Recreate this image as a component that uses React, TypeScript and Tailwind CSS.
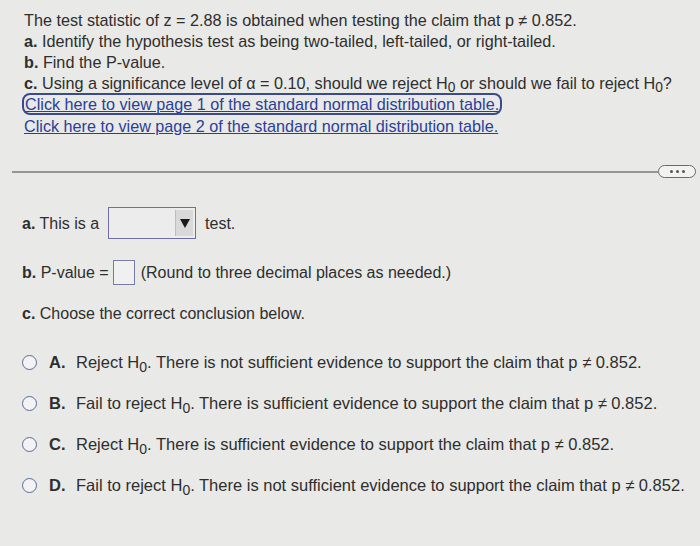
import React from 'react'

const H0 = () => (
  <span>
    H<sub className="text-[0.85em] relative top-[0.25em]">0</sub>
  </span>
)

const OPTIONS: { letter: string; text: React.ReactNode }[] = [
  { letter: 'A.', text: <>Reject <H0 />. There is not sufficient evidence to support the claim that p ≠ 0.852.</> },
  { letter: 'B.', text: <>Fail to reject <H0 />. There is sufficient evidence to support the claim that p ≠ 0.852.</> },
  { letter: 'C.', text: <>Reject <H0 />. There is sufficient evidence to support the claim that p ≠ 0.852.</> },
  { letter: 'D.', text: <>Fail to reject <H0 />. There is not sufficient evidence to support the claim that p ≠ 0.852.</> },
]

export default function App() {
  return (
    <div className="w-[700px] h-[546px] overflow-hidden bg-[#e9e9e7] text-[#2e2e2e] text-[16px] leading-[21px] font-['Liberation_Sans',Arial,sans-serif]">
      {/* Question */}
      <div className="px-[24px] pt-[10px] text-[16.2px]">
        <p>The test statistic of z = 2.88 is obtained when testing the claim that p ≠ 0.852.</p>
        <p><b>a.</b> Identify the hypothesis test as being two-tailed, left-tailed, or right-tailed.</p>
        <p><b>b.</b> Find the P-value.</p>
        <p><b>c.</b> Using a significance level of α = 0.10, should we reject <H0 /> or should we fail to reject <H0 />?</p>
        <div className="flex flex-col items-start mt-[1px]">
          <a className="text-[#2a3f9a] underline rounded-[6px] outline outline-2 outline-[#3b4a8a] px-[1px] leading-[18px]">
            Click here to view page 1 of the standard normal distribution table.
          </a>
          <a className="text-[#2a3f9a] underline mt-[3px]">
            Click here to view page 2 of the standard normal distribution table.
          </a>
        </div>
      </div>

      {/* Divider */}
      <div className="flex items-center mt-[28px] pl-[12px] pr-[4px]">
        <div className="flex-1 h-[2px] bg-[#969696]" />
        <div className="flex items-center justify-center gap-[3px] w-[38px] h-[13px] rounded-full border border-[#6a6a6a] bg-[#f2f2f2]">
          <span className="w-[3px] h-[3px] rounded-full bg-[#555]" />
          <span className="w-[3px] h-[3px] rounded-full bg-[#555]" />
          <span className="w-[3px] h-[3px] rounded-full bg-[#555]" />
        </div>
      </div>

      {/* Answers */}
      <div className="pl-[22px] pr-[4px] mt-[29px]">
        <div className="flex items-center h-[32px]">
          <span><b>a.</b> This is a</span>
          <div className="ml-[9px] w-[88px] h-[32px] border border-[#6f6fa8] bg-[#ececec] flex justify-end items-stretch p-[2px]">
            <div className="w-[18px] bg-[#d9d9d9] border-l border-[#bdbdbd] flex items-center justify-center">
              <svg width="10" height="10" viewBox="0 0 10 10"><path d="M0 1h10L5 10z" fill="#1a1a1a" /></svg>
            </div>
          </div>
          <span className="ml-[9px]">test.</span>
        </div>

        <div className="flex items-center mt-[20px] h-[26px]">
          <span><b>b.</b> P-value =</span>
          <div className="ml-[4px] w-[22px] h-[25px] border border-[#7a7aa8] bg-[#f0f0f0]" />
          <span className="ml-[6px]">(Round to three decimal places as needed.)</span>
        </div>

        <p className="mt-[18px]"><b>c.</b> Choose the correct conclusion below.</p>

        <div className="mt-[28px] flex flex-col gap-[20px] text-[16.5px]">
          {OPTIONS.map(o => (
            <div key={o.letter} className="flex items-center h-[21px] whitespace-nowrap">
              <span className="w-[15px] h-[15px] rounded-full border-[1.5px] border-[#5a6a9a] bg-[#f3f3f3] shrink-0" />
              <b className="ml-[12px] w-[27px] shrink-0">{o.letter}</b>
              <span>{o.text}</span>
            </div>
          ))}
        </div>
      </div>
    </div>
  )
}
